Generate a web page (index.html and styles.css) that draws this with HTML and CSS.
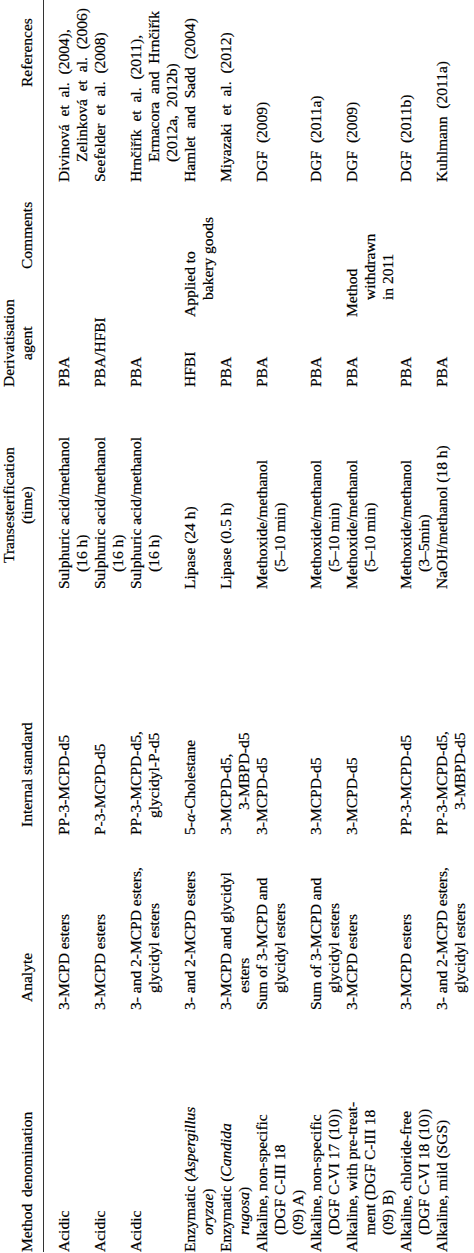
FILE: index.html
```html
<!DOCTYPE html>
<html>
<head>
<meta charset="utf-8">
<link rel="stylesheet" href="styles.css">
</head>
<body>
<div class="page">
  <div class="rot">
    <table class="t">
      <colgroup>
        <col class="w1"><col class="w2"><col class="w3"><col class="w4"><col class="w5"><col class="w6"><col class="w7">
      </colgroup>
      <thead>
        <tr>
          <th class="h1">Method denomination</th>
          <th class="h2">Analyte</th>
          <th class="h3">Internal standard</th>
          <th class="h4"><span class="hc">Transesterification<br>(time)</span></th>
          <th class="h5"><span class="hc">Derivatisation<br>agent</span></th>
          <th class="h6">Comments</th>
          <th class="h7">References</th>
        </tr>
      </thead>
      <tbody>
        <tr class="first">
          <td>Acidic</td>
          <td>3-MCPD esters</td>
          <td>PP-3-MCPD-d5</td>
          <td>Sulphuric acid/methanol<br>(16 h)</td>
          <td>PBA</td>
          <td></td>
          <td class="ref">Divinová et al. (2004),<br>Zelinková et al. (2006)</td>
        </tr>
        <tr>
          <td>Acidic</td>
          <td>3-MCPD esters</td>
          <td>P-3-MCPD-d5</td>
          <td>Sulphuric acid/methanol<br>(16 h)</td>
          <td>PBA/HFBI</td>
          <td></td>
          <td class="ref">Seefelder et al. (2008)</td>
        </tr>
        <tr>
          <td>Acidic</td>
          <td>3- and 2-MCPD esters,<br>glycidyl esters</td>
          <td>PP-3-MCPD-d5,<br>glycidyl-P-d5</td>
          <td>Sulphuric acid/methanol<br>(16 h)</td>
          <td>PBA</td>
          <td></td>
          <td class="ref">Hrnčiřík et al. (2011),<br>Ermacora and Hrnčiřík<br>(2012a, 2012b)</td>
        </tr>
        <tr>
          <td>Enzymatic (<i>Aspergillus</i><br><i>oryzae</i>)</td>
          <td>3- and 2-MCPD esters</td>
          <td>5-<i>α</i>-Cholestane</td>
          <td>Lipase (24 h)</td>
          <td>HFBI</td>
          <td>Applied to<br>bakery goods</td>
          <td class="ref">Hamlet and Sadd (2004)</td>
        </tr>
        <tr>
          <td>Enzymatic (<i>Candida</i><br><i>rugosa</i>)</td>
          <td>3-MCPD and glycidyl<br>esters</td>
          <td>3-MCPD-d5,<br><span class="x2">3-MBPD-d5</span></td>
          <td>Lipase (0.5 h)</td>
          <td>PBA</td>
          <td></td>
          <td class="ref">Miyazaki et al. (2012)</td>
        </tr>
        <tr>
          <td>Alkaline, non-specific<br>(DGF C-III 18<br>(09) A)</td>
          <td>Sum of 3-MCPD and<br>glycidyl esters</td>
          <td>3-MCPD-d5</td>
          <td>Methoxide/methanol<br>(5–10 min)</td>
          <td>PBA</td>
          <td></td>
          <td class="ref">DGF (2009)</td>
        </tr>
        <tr>
          <td>Alkaline, non-specific<br>(DGF C-VI 17 (10))</td>
          <td>Sum of 3-MCPD and<br>glycidyl esters</td>
          <td>3-MCPD-d5</td>
          <td>Methoxide/methanol<br>(5–10 min)</td>
          <td>PBA</td>
          <td></td>
          <td class="ref">DGF (2011a)</td>
        </tr>
        <tr>
          <td>Alkaline, with pre-treat-<br>ment (DGF C-III 18<br>(09) B)</td>
          <td>3-MCPD esters</td>
          <td>3-MCPD-d5</td>
          <td>Methoxide/methanol<br>(5–10 min)</td>
          <td>PBA</td>
          <td>Method<br>withdrawn<br>in 2011</td>
          <td class="ref">DGF (2009)</td>
        </tr>
        <tr>
          <td>Alkaline, chloride-free<br>(DGF C-VI 18 (10))</td>
          <td>3-MCPD esters</td>
          <td>PP-3-MCPD-d5</td>
          <td>Methoxide/methanol<br>(3–5min)</td>
          <td>PBA</td>
          <td></td>
          <td class="ref">DGF (2011b)</td>
        </tr>
        <tr>
          <td>Alkaline, mild (SGS)</td>
          <td>3- and 2-MCPD esters,<br>glycidyl esters</td>
          <td>PP-3-MCPD-d5,<br><span class="x2">3-MBPD-d5</span></td>
          <td>NaOH/methanol (18 h)</td>
          <td>PBA</td>
          <td></td>
          <td class="ref">Kuhlmann (2011a)</td>
        </tr>
      </tbody>
    </table>
  </div>
</div>
</body>
</html>
```

FILE: styles.css
```css
html, body {
  margin: 0;
  padding: 0;
  background: #ffffff;
}
.page {
  width: 474px;
  height: 1253px;
  overflow: hidden;
}
.rot {
  width: 1253px;
  height: 474px;
  transform-origin: 0 0;
  transform: translateY(1253px) rotate(-90deg);
}
.t {
  border-collapse: collapse;
  table-layout: fixed;
  width: 1320px;
  margin-top: -3px;
  margin-left: -2px;
  font-family: "Liberation Serif", "Times New Roman", serif;
  font-size: 15.5px;
  line-height: 18px;
  color: #000000;
  -webkit-text-stroke: 0.2px #000000;
}
.w1 { width: 242px; }
.w2 { width: 175px; }
.w3 { width: 246px; }
.w4 { width: 202px; }
.w5 { width: 70px; }
.w6 { width: 135px; }
.w7 { width: 250px; }
.t th {
  font-weight: normal;
  text-align: left;
  vertical-align: bottom;
  white-space: nowrap;
  padding: 0 0 7px 0;
  border-bottom: 1px solid #333333;
}
.hc {
  display: inline-block;
  text-align: center;
}
.t th.h1 { padding-left: 0; word-spacing: 3px; }
.t th.h2 { padding-left: 8px; }
.t th.h3 { padding-left: 8px; }
.t th.h4 { padding-left: 26px; }
.t th.h5 { padding-left: 0; }
.t th.h6 { padding-left: 48px; }
.t th.h7 { padding-left: 95px; }
.t td {
  vertical-align: top;
  white-space: nowrap;
  padding: 0 0 0 17px;
  text-indent: -17px;
}
.t td.ref {
  word-spacing: 4px;
  padding-left: 20px;
  text-indent: -20px;
}
.t tr.first td {
  padding-top: 11px;
}
.x2 {
  padding-left: 8px;
}
```
